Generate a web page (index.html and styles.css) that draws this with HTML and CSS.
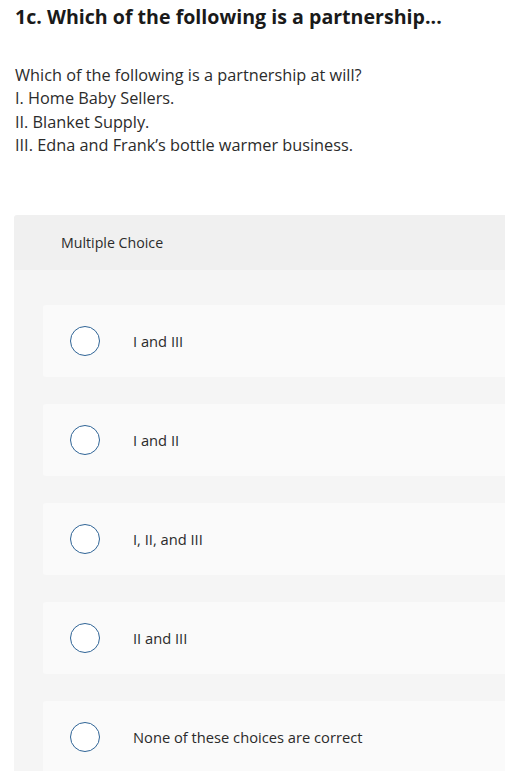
FILE: index.html
```html
<!DOCTYPE html>
<html lang="en">
<head>
<meta charset="utf-8">
<title>Question 1c</title>
<link rel="stylesheet" href="styles.css">
</head>
<body>
<div class="page">
  <h1 class="title">1c. Which of the following is a partnership...</h1>
  <div class="prompt">
    <p>Which of the following is a partnership at will?</p>
    <p>I. Home Baby Sellers.</p>
    <p>II. Blanket Supply.</p>
    <p>III. Edna and Frank’s bottle warmer business.</p>
  </div>
  <section class="panel">
    <div class="panel-head">Multiple Choice</div>
    <div class="panel-body">
      <label class="option"><span class="radio"></span><span class="opt-text">I and III</span></label>
      <label class="option"><span class="radio"></span><span class="opt-text">I and II</span></label>
      <label class="option"><span class="radio"></span><span class="opt-text">I, II, and III</span></label>
      <label class="option"><span class="radio"></span><span class="opt-text">II and III</span></label>
      <label class="option"><span class="radio"></span><span class="opt-text">None of these choices are correct</span></label>
    </div>
  </section>
</div>
</body>
</html>
```
FILE: styles.css
```css
html, body {
  margin: 0;
  padding: 0;
  background: #fff;
  overflow: hidden;
}
body {
  font-family: "Open Sans", Lato, Arial, sans-serif;
  color: #222;
}
.page {
  padding: 3px 0 0 15px;
}
.title {
  margin: 0;
  font-size: 19.6px;
  font-weight: 700;
  line-height: 28px;
  color: #1a1a1a;
}
.prompt {
  margin-top: 33px;
  font-size: 16.3px;
  line-height: 23.4px;
  color: #2b2b2b;
}
.prompt p {
  margin: 0;
}
.panel {
  margin-top: 57px;
  margin-left: -1px;
  border-radius: 3px 0 0 0;
  overflow: hidden;
}
.panel-head {
  background: #f0f0f0;
  height: 55px;
  display: flex;
  align-items: center;
  padding-left: 47px;
  font-size: 14.2px;
  color: #2b2b2b;
}
.panel-body {
  background: #f5f5f5;
  padding: 35px 0 0 29px;
  display: flex;
  flex-direction: column;
  gap: 27.2px;
}
.option {
  height: 72px;
  background: #fafafa;
  border-radius: 3px 0 0 3px;
  display: flex;
  align-items: center;
  padding-left: 27px;
}
.radio {
  width: 28px;
  height: 28px;
  border: 1.5px solid #2f6496;
  border-radius: 50%;
  background: #fff;
  flex: none;
}
.opt-text {
  margin-left: 33px;
  font-size: 14.7px;
  color: #2b2b2b;
}
```
